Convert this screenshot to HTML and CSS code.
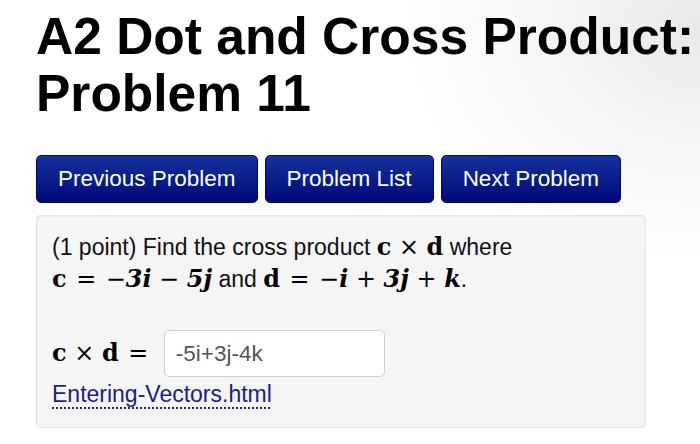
FILE: index.html
```html
<!DOCTYPE html>
<html lang="en">
<head>
  <meta charset="UTF-8" />
  <meta name="viewport" content="width=device-width, initial-scale=1.0" />
  <title>A2 Dot and Cross Product: Problem 11</title>
  <link rel="stylesheet" href="styles.css">
</head>
<body>
  <h1 class="problem-title">A2 Dot and Cross Product: Problem 11</h1>

  <div class="problem-nav">
    <a class="btn" href="#">Previous Problem</a>
    <a class="btn" href="#">Problem List</a>
    <a class="btn" href="#">Next Problem</a>
  </div>

  <div class="well">
    <p class="problem-text">
      (1 point) Find the cross product
      <span class="math"><span class="mb">c</span><span class="mo">&times;</span><span class="mb">d</span></span>
      where<br>
      <span class="math"><span class="mb">c</span><span class="mr">=</span><span class="mn">&minus;</span><span class="mi">3i</span><span class="mo">&minus;</span><span class="mi">5j</span></span>
      and
      <span class="math"><span class="mb">d</span><span class="mr">=</span><span class="mn">&minus;</span><span class="mi">i</span><span class="mo">+</span><span class="mi">3j</span><span class="mo">+</span><span class="mi">k</span></span>.
    </p>

    <div class="answer-row">
      <span class="math"><span class="mb">c</span><span class="mo">&times;</span><span class="mb">d</span><span class="mr">=</span></span>
      <input class="answer" type="text" value="-5i+3j-4k" />
    </div>

    <a class="help-link" href="#">Entering-Vectors.html</a>
  </div>
</body>
</html>
```

FILE: styles.css
```css
body {
  margin: 0;
  padding: 8px 0 0 36px;
  font-family: "Liberation Sans", Arial, sans-serif;
  color: #111;
  background: radial-gradient(ellipse 300px 240px at 100% 6%, #e9e9e9 0%, #f7f7f7 55%, #ffffff 100%) no-repeat, #fff;
  height: 436px;
  overflow: hidden;
}

.problem-title {
  margin: 0;
  font-size: 51.5px;
  line-height: 57px;
  font-weight: bold;
  color: #000;
}

.problem-nav {
  display: flex;
  gap: 7px;
  margin-top: 33px;
}

.btn {
  display: block;
  height: 46px;
  line-height: 46px;
  padding: 0 21px;
  font-size: 22.5px;
  color: #fff;
  text-decoration: none;
  background: linear-gradient(#14329c, #00087a);
  border: 1px solid #00075c;
  border-radius: 5px;
}

.well {
  width: 578px;
  margin-top: 12px;
  padding: 15px 15px 19px;
  background: #f5f5f5;
  border: 1px solid #e3e3e3;
  border-radius: 4px;
  box-shadow: inset 0 1px 1px rgba(0, 0, 0, 0.05);
  font-size: 23px;
}

.problem-text {
  margin: 0 0 35px;
  line-height: 32px;
}

.math {
  font-family: "DejaVu Serif", "Liberation Serif", serif;
  font-size: 1.04em;
  line-height: 1;
  color: #000;
}

.mb {
  font-weight: bold;
}

.mi {
  font-weight: bold;
  font-style: italic;
}

.mn {
  font-weight: normal;
}

.mo {
  margin: 0 0.32em;
}

.mr {
  margin: 0 0.4em;
}

.answer-row {
  display: flex;
  align-items: center;
}

.answer {
  box-sizing: border-box;
  width: 221px;
  height: 47px;
  margin-left: 6px;
  padding: 0 11px;
  font-family: "Liberation Sans", Arial, sans-serif;
  font-size: 22.5px;
  color: #555;
  background: #fff;
  border: 1px solid #cfcfcf;
  border-radius: 5px;
}

.help-link {
  display: inline-block;
  margin-top: 4px;
  line-height: 26px;
  color: #1c1c8a;
  text-decoration: underline dotted 2px;
  text-underline-offset: 5px;
}
```
